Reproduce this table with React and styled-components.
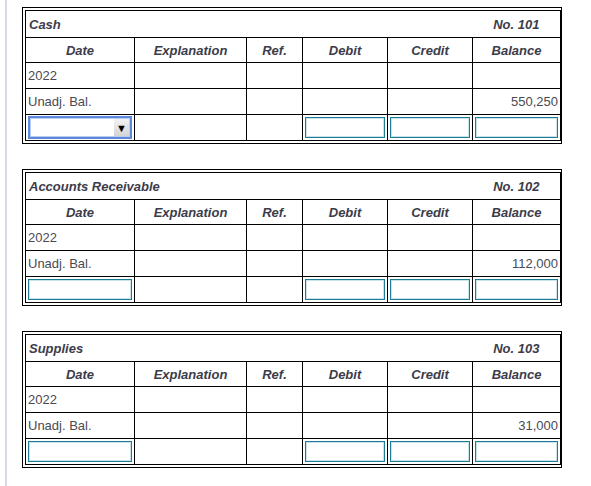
import React from 'react';
import styled, { createGlobalStyle } from 'styled-components';

const GlobalStyle = createGlobalStyle`
  html, body {
    margin: 0;
    padding: 0;
    background: #ffffff;
  }
  body {
    font-family: "Liberation Sans", Arial, sans-serif;
  }
`;

const Page = styled.div`
  margin-left: 5px;
  border-left: 2px solid #d7dae4;
  padding: 7px 0 0 15px;
  min-height: 479px;
  display: flex;
  flex-direction: column;
  gap: 25px;
`;

const LedgerFrame = styled.div`
  width: 540px;
  box-sizing: border-box;
  border: 1px solid #000;
  padding: 2px;
`;

const LedgerTable = styled.table`
  width: 100%;
  border-collapse: collapse;
  table-layout: fixed;
  border: 1px solid #000;
  font-size: 13px;
`;

const Cell = styled.td`
  border: 1px solid #000;
  height: 25px;
  padding: 0 2px;
  color: #4a4a52;
  text-align: ${p => (p.$right ? 'right' : 'left')};
  vertical-align: middle;
  white-space: nowrap;
`;

const TitleCell = styled.td`
  border-top: 1px solid #000;
  border-bottom: 1px solid #000;
  height: 26px;
  padding: 0 3px;
  font-weight: bold;
  font-style: italic;
  color: #3c3c4a;
  text-align: ${p => (p.$center ? 'center' : 'left')};
`;

const HeadCell = styled.th`
  border: 1px solid #000;
  height: 24px;
  padding: 0;
  font-weight: bold;
  font-style: italic;
  color: #3c3c4a;
  text-align: center;
`;

const InputCell = styled.td`
  border: 1px solid #000;
  height: 25px;
  padding: 0 2px;
`;

const TextBox = styled.input`
  display: block;
  width: 100%;
  height: 21px;
  box-sizing: border-box;
  margin: 0;
  border: 1px solid #1f7c96;
  outline: 1px solid #c9e3ea;
  outline-offset: -2px;
  background: #fff;
  font: inherit;
  padding: 0 3px;
`;

const SelectBox = styled.div`
  display: flex;
  height: 23px;
  box-sizing: border-box;
  border: 2px solid #5d88de;
  background: #fff;
  box-shadow: inset 0 0 0 1px #b9cdf3;
`;

const SelectText = styled.div`
  flex: 1;
`;

const SelectArrow = styled.div`
  width: 15px;
  margin: 1px;
  background: linear-gradient(#f3f3f3, #d4d4d4);
  display: flex;
  align-items: center;
  justify-content: center;
  font-size: 11px;
  color: #000;
`;

const Col = styled.col`
  width: ${p => p.$w}px;
`;

const accounts = [
  { name: 'Cash', no: 101, balance: '550,250', select: true },
  { name: 'Accounts Receivable', no: 102, balance: '112,000' },
  { name: 'Supplies', no: 103, balance: '31,000' },
];

const widths = [109, 112, 56, 85, 85, 88];
const heads = ['Date', 'Explanation', 'Ref.', 'Debit', 'Credit', 'Balance'];

function Ledger({ account }) {
  return (
    <LedgerFrame>
      <LedgerTable>
        <colgroup>
          {widths.map((w, i) => <Col key={i} $w={w} />)}
        </colgroup>
        <tbody>
          <tr>
            <TitleCell colSpan={5}>{account.name}</TitleCell>
            <TitleCell $center>No. {account.no}</TitleCell>
          </tr>
          <tr>
            {heads.map(h => <HeadCell key={h}>{h}</HeadCell>)}
          </tr>
          <tr>
            <Cell>2022</Cell>
            <Cell /><Cell /><Cell /><Cell /><Cell />
          </tr>
          <tr>
            <Cell>Unadj. Bal.</Cell>
            <Cell /><Cell /><Cell /><Cell />
            <Cell $right>{account.balance}</Cell>
          </tr>
          <tr>
            <InputCell>
              {account.select ? (
                <SelectBox>
                  <SelectText />
                  <SelectArrow>▼</SelectArrow>
                </SelectBox>
              ) : (
                <TextBox type="text" />
              )}
            </InputCell>
            <InputCell />
            <InputCell />
            <InputCell><TextBox type="text" /></InputCell>
            <InputCell><TextBox type="text" /></InputCell>
            <InputCell><TextBox type="text" /></InputCell>
          </tr>
        </tbody>
      </LedgerTable>
    </LedgerFrame>
  );
}

export default function App() {
  return (
    <>
      <GlobalStyle />
      <Page>
        {accounts.map(a => <Ledger key={a.no} account={a} />)}
      </Page>
    </>
  );
}
